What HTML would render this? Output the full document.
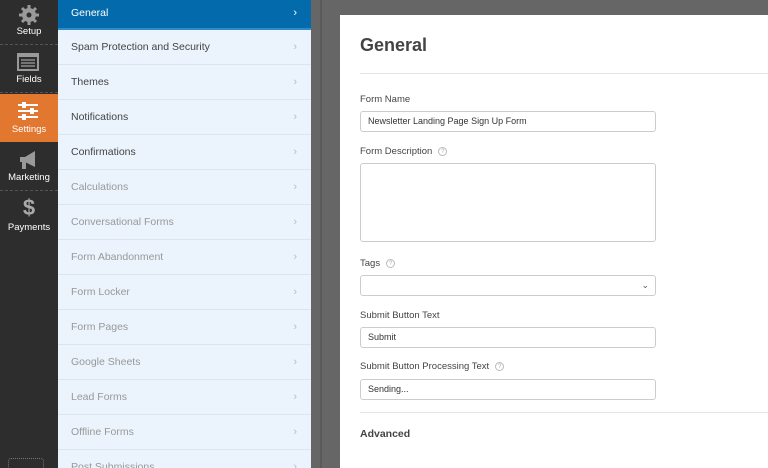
<!DOCTYPE html>
<html style="overflow:hidden;width:768px;height:468px"><head><meta charset="utf-8"><style>
*{box-sizing:border-box;margin:0;padding:0}
body{width:768px;height:468px;overflow:hidden;background:#666;font-family:"Liberation Sans",sans-serif;position:relative}
#nav{position:absolute;left:0;top:0;width:58px;height:468px;background:#2d2d2d;overflow:hidden}
.ni{position:absolute;left:0;width:58px;height:48px;color:#fff;font-size:9.5px;text-align:center;border-bottom:1px dashed #555}
.ni span{position:absolute;left:0;right:0;bottom:7px}
.ni svg{position:absolute;left:17px;top:5px}
#list{position:absolute;left:58px;top:0;width:253px;height:468px;background:#ebf3fc;overflow:hidden}
.row{position:absolute;left:0;width:253px;height:35px;border-bottom:1px solid #dce4ee;font-size:10.5px;color:#444;padding-left:13px;line-height:34px}
.row.dim{color:#999}
.row:after{content:"›";position:absolute;right:14px;top:0;color:#bbb;font-size:11px}
.row.sel{background:#036aab;color:#fff;height:30px;line-height:27px;border-bottom:2px solid #2e8acb}
.row.sel:after{color:#fff;top:0}
#edge{position:absolute;left:320px;top:0;width:2px;height:468px;background:#5a5a5a}
#main{position:absolute;left:340px;top:15px;width:428px;height:453px;background:#fff;overflow:hidden}
h1{position:absolute;left:20px;top:20px;font-size:18px;font-weight:bold;color:#444}
.hr{position:absolute;left:20px;right:0;height:1px;background:#e5e5e5}
.lbl{position:absolute;left:20px;font-size:9.5px;color:#444}
.q{display:inline-block;width:9px;height:9px;border:1px solid #bbb;border-radius:50%;font-size:6px;color:#aaa;text-align:center;line-height:8px;margin-left:6px;vertical-align:1px}
.in{position:absolute;left:20px;width:296px;height:21px;border:1px solid #ccc;border-radius:3px;font-size:9px;color:#333;padding-left:7px;line-height:19px}
</style></head><body>
<div id="nav">
 <div class="ni" style="top:0;height:45px"><svg width="24" height="22" viewBox="0 0 24 22"><circle cx="12" cy="10" r="7" fill="#999"/><g stroke="#999" stroke-width="3"><line x1="12" y1="0" x2="12" y2="20"/><line x1="2" y1="10" x2="22" y2="10"/><line x1="5" y1="3" x2="19" y2="17"/><line x1="19" y1="3" x2="5" y2="17"/></g><circle cx="12" cy="10" r="2.5" fill="#2d2d2d"/></svg><span>Setup</span></div>
 <div class="ni" style="top:45px"><svg width="24" height="22" viewBox="0 0 24 22"><rect x="1" y="4" width="20" height="16" fill="none" stroke="#999" stroke-width="2"/><rect x="1" y="4" width="20" height="3" fill="#999"/><g stroke="#999" stroke-width="1.3"><line x1="4" y1="10" x2="18" y2="10"/><line x1="4" y1="13" x2="18" y2="13"/><line x1="4" y1="16" x2="18" y2="16"/></g></svg><span>Fields</span></div>
 <div class="ni" style="top:94px;background:#e27730;border:none;height:48px"><svg width="24" height="22" viewBox="0 0 24 22"><g stroke="#fff" stroke-width="2"><line x1="1" y1="6" x2="21" y2="6"/><line x1="1" y1="12" x2="21" y2="12"/><line x1="1" y1="18" x2="21" y2="18"/></g><g fill="#fff"><rect x="5" y="3" width="4" height="6"/><rect x="13" y="9" width="4" height="6"/><rect x="5" y="15" width="4" height="6"/></g></svg><span>Settings</span></div>
 <div class="ni" style="top:143px"><svg width="24" height="24" viewBox="0 0 24 24"><path d="M3 9h5l10-6v16l-10-5H3z" fill="#999"/><rect x="5" y="14" width="4" height="7" fill="#999"/></svg><span>Marketing</span></div>
 <div class="ni" style="top:192px;border:none"><span style="bottom:auto;top:3px;font-size:22px;color:#aaa;font-weight:bold">$</span><span>Payments</span></div>
 <div style="position:absolute;left:8px;top:458px;width:36px;height:14px;border:1px dotted #777;border-radius:3px"></div>
</div>
<div id="list">
 <div class="row sel" style="top:0">General</div>
 <div class="row" style="top:30px">Spam Protection and Security</div>
 <div class="row" style="top:65px">Themes</div>
 <div class="row" style="top:100px">Notifications</div>
 <div class="row" style="top:135px">Confirmations</div>
 <div class="row dim" style="top:170px">Calculations</div>
 <div class="row dim" style="top:205px">Conversational Forms</div>
 <div class="row dim" style="top:240px">Form Abandonment</div>
 <div class="row dim" style="top:275px">Form Locker</div>
 <div class="row dim" style="top:310px">Form Pages</div>
 <div class="row dim" style="top:345px">Google Sheets</div>
 <div class="row dim" style="top:380px">Lead Forms</div>
 <div class="row dim" style="top:415px">Offline Forms</div>
 <div class="row dim" style="top:450px">Post Submissions</div>
</div>
<div id="edge"></div>
<div id="main">
 <h1>General</h1>
 <div class="hr" style="top:58px"></div>
 <div class="lbl" style="top:79px">Form Name</div>
 <div class="in" style="top:96px">Newsletter Landing Page Sign Up Form</div>
 <div class="lbl" style="top:131px">Form Description<span class="q">?</span></div>
 <div class="in" style="top:148px;height:79px"></div>
 <div class="lbl" style="top:243px">Tags<span class="q">?</span></div>
 <div class="in" style="top:260px"><span style="position:absolute;right:6px;top:0;font-size:9px;color:#555">&#8964;</span></div>
 <div class="lbl" style="top:295px">Submit Button Text</div>
 <div class="in" style="top:312px">Submit</div>
 <div class="lbl" style="top:346px">Submit Button Processing Text<span class="q">?</span></div>
 <div class="in" style="top:364px">Sending...</div>
 <div class="hr" style="top:397px"></div>
 <div class="lbl" style="top:413px;font-size:10.5px;font-weight:bold">Advanced</div>
</div>
</body></html>
